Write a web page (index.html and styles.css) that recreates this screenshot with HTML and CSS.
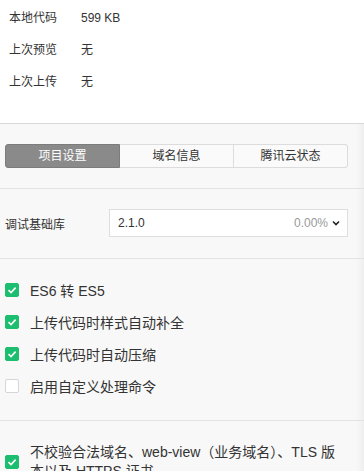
FILE: index.html
```html
<!DOCTYPE html>
<html>
<head>
<meta charset="utf-8">
<link rel="stylesheet" href="styles.css">
</head>
<body>
<div class="page">
  <section class="info">
    <div class="info-row"><span class="info-label">本地代码</span><span class="info-value">599 KB</span></div>
    <div class="info-row"><span class="info-label">上次预览</span><span class="info-value">无</span></div>
    <div class="info-row"><span class="info-label">上次上传</span><span class="info-value">无</span></div>
  </section>
  <div class="lower">
    <section class="sec tabs-sec">
      <div class="tabs">
        <div class="tab active">项目设置</div>
        <div class="tab">域名信息</div>
        <div class="tab">腾讯云状态</div>
      </div>
    </section>
    <section class="sec select-sec">
      <span class="select-label">调试基础库</span>
      <div class="select">
        <span class="select-value">2.1.0</span>
        <span class="select-pct">0.00%</span>
        <svg class="chev" width="8" height="6" viewBox="0 0 8 6"><path d="M1 1.5 L4 4.5 L7 1.5" fill="none" stroke="#222" stroke-width="1.6"/></svg>
      </div>
    </section>
    <section class="sec checks">
      <label class="check"><span class="box on"><svg width="14" height="14" viewBox="0 0 14 14"><path d="M3.5 7.2 L6 9.6 L10.6 4.6" fill="none" stroke="#fff" stroke-width="1.6"/></svg></span><span class="check-text">ES6 转 ES5</span></label>
      <label class="check"><span class="box on"><svg width="14" height="14" viewBox="0 0 14 14"><path d="M3.5 7.2 L6 9.6 L10.6 4.6" fill="none" stroke="#fff" stroke-width="1.6"/></svg></span><span class="check-text">上传代码时样式自动补全</span></label>
      <label class="check"><span class="box on"><svg width="14" height="14" viewBox="0 0 14 14"><path d="M3.5 7.2 L6 9.6 L10.6 4.6" fill="none" stroke="#fff" stroke-width="1.6"/></svg></span><span class="check-text">上传代码时自动压缩</span></label>
      <label class="check"><span class="box"></span><span class="check-text">启用自定义处理命令</span></label>
    </section>
    <section class="sec last">
      <label class="check multi"><span class="box on"><svg width="14" height="14" viewBox="0 0 14 14"><path d="M3.5 7.2 L6 9.6 L10.6 4.6" fill="none" stroke="#fff" stroke-width="1.6"/></svg></span><span class="check-text">不校验合法域名、web-view（业务域名）、TLS 版<br>本以及 HTTPS 证书</span></label>
    </section>
  </div>
</div>
</body>
</html>
```
FILE: styles.css
```css
html, body {
  margin: 0;
  padding: 0;
}
body {
  width: 364px;
  height: 471px;
  overflow: hidden;
  font-family: "Liberation Sans", "Noto Sans CJK SC", sans-serif;
  color: #333;
  background: #f7f7f7;
}
.page {
  display: flex;
  flex-direction: column;
}
.info {
  background: #fff;
  padding: 2px 0 25px 9px;
  border-bottom: 1px solid #d8d8d8;
}
.info-row {
  display: flex;
  height: 32px;
  line-height: 32px;
  font-size: 12px;
}
.info-label {
  width: 72px;
}
.lower {
  background: #f8f8f8;
  box-shadow: inset -7px 0 6px -4px #ececec;
}
.sec {
  border-bottom: 1px solid #e2e2e2;
}
.tabs-sec {
  padding: 20px 16px 20px 5px;
}
.tabs {
  display: flex;
  height: 24px;
}
.tab {
  flex: 1;
  box-sizing: border-box;
  border: 1px solid #dcdcdc;
  border-left: none;
  background: #fafafa;
  font-size: 12px;
  line-height: 22px;
  text-align: center;
  color: #333;
}
.tab:last-child {
  border-radius: 0 3px 3px 0;
}
.tab.active {
  background: #8a8a8a;
  border: 1px solid #7c7c7c;
  color: #fff;
  border-radius: 3px 0 0 3px;
}
.select-sec {
  display: flex;
  align-items: center;
  padding: 20px 16px 21px 5px;
}
.select-label {
  width: 104px;
  font-size: 12px;
}
.select {
  flex: 1;
  height: 28px;
  box-sizing: border-box;
  border: 1px solid #dedede;
  background: #fff;
  display: flex;
  align-items: center;
  padding: 0 7px 0 8px;
  font-size: 12px;
}
.select-value {
  flex: 1;
  color: #333;
}
.select-pct {
  color: #999;
  margin-right: 4px;
}
.chev {
  display: block;
}
.checks {
  padding: 15px 0 18px 5px;
}
.check {
  display: flex;
  align-items: center;
  height: 32px;
  font-size: 14px;
  color: #333;
}
.box {
  width: 14px;
  height: 14px;
  box-sizing: border-box;
  border: 1px solid #d6d6d6;
  border-radius: 2px;
  background: #fff;
  margin-right: 11px;
  flex: none;
  display: flex;
}
.box svg {
  display: block;
  margin: -1px;
}
.box.on {
  background: #1bbd6e;
  border-color: #1bbd6e;
}
.last {
  border-bottom: none;
  padding: 22px 0 0 5px;
}
.check.multi {
  height: auto;
  align-items: center;
}
.check.multi .check-text {
  white-space: nowrap;
  line-height: 19px;
}
```
